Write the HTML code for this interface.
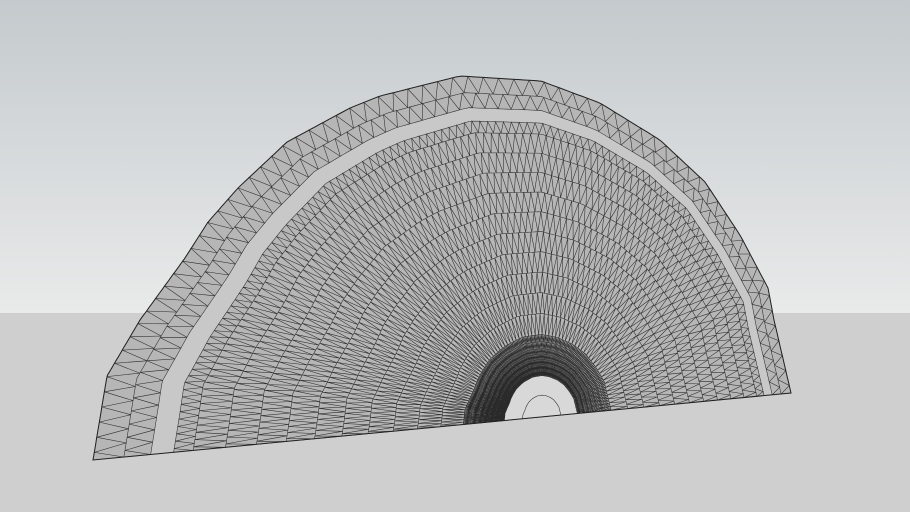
<!DOCTYPE html><html><head><style>
html,body{margin:0;padding:0;width:910px;height:512px;overflow:hidden}
</style></head><body>
<svg id="s" width="910" height="512" viewBox="0 0 910 512" xmlns="http://www.w3.org/2000/svg">
<defs><linearGradient id="sky" x1="0" y1="0" x2="0" y2="1">
<stop offset="0" stop-color="#c4cacd"/><stop offset="1" stop-color="#e9eaea"/></linearGradient></defs>
<rect width="910" height="313" fill="url(#sky)"/>
<rect y="313" width="910" height="199" fill="#cfcfcf"/>
<g id="g"></g>
</svg>
<script>
var pts=[[791,393],[774,320],[768,288],[740,235],[705,182],[660,140],[600,103],[541,81],[460,76],[380,96],[350,108],[287,142],[238,188],[208,222],[185,258],[140,320],[107,376],[93,460]];
var cum=[0];for(var i=1;i<pts.length;i++){var dx=pts[i][0]-pts[i-1][0],dy=pts[i][1]-pts[i-1][1];cum.push(cum[i-1]+Math.sqrt(dx*dx+dy*dy));}
var L=cum[cum.length-1];
function Bd(t){var s=t/Math.PI*L;for(var i=1;i<pts.length;i++){if(s<=cum[i]||i==pts.length-1){var f=(s-cum[i-1])/(cum[i]-cum[i-1]);f=Math.max(0,Math.min(1,f));
return [pts[i-1][0]+f*(pts[i][0]-pts[i-1][0]),pts[i-1][1]+f*(pts[i][1]-pts[i-1][1])];}}}
var C=[542,417],g0=0.2865;
function P(r,t){t=Math.max(0,Math.min(Math.PI,t));var b=Bd(t),c=Math.cos(t);var s=r*(1+g0*c)/(1+g0*r*c);return [C[0]+s*(b[0]-C[0]),C[1]+s*(b[1]-C[1])];}
function f1(p){return p[0].toFixed(1)+' '+p[1].toFixed(1);}
var g=document.getElementById('g'),out='';
var M=200;
var dd='';for(var i=0;i<=M;i++){dd+=(i?'L':'M')+f1(P(1,Math.PI*i/M));}dd+='Z';
function poly(r1,r2,fill){var s='';for(var i=0;i<=M;i++){s+=(i?'L':'M')+f1(P(r2,Math.PI*i/M));}
for(var i=M;i>=0;i--){s+='L'+f1(P(r1,Math.PI*i/M));}return '<path d="'+s+'Z" fill="'+fill+'"/>';}
var rings=[0.114,0.13,0.145,0.16,0.175,0.19,0.21,0.23,0.29,0.35,0.41,0.47,0.53,0.59,0.65,0.71,0.77,0.83,0.865,0.905,0.95,1.0];
var bandA=0.865,bandB=0.905;
out+='<path d="'+dd+'" fill="#b6b6b6"/>';
out+=poly(bandA,bandB,'#c8c8c8');
out+=poly(0,0.114,'#d8d8d8');
var lines='';
for(var j=0;j<rings.length-1;j++){var r1=rings[j],r2=rings[j+1];
if(r1==bandA)continue;
var N=r1<0.23?180:(r1<0.865?Math.round(60+r1*70):(r1<0.95?75:70));
for(var i=0;i<=N;i++){var t=Math.PI*i/N,t2=Math.min(Math.PI,Math.PI*(i+0.5)/N);
lines+='M'+f1(P(r1,t))+'L'+f1(P(r2,t2));
if(i<N){lines+='L'+f1(P(r1,Math.PI*(i+1)/N));}}}
for(var j=0;j<rings.length;j++){var s='';for(var i=0;i<=M;i++){s+=(i?'L':'M')+f1(P(rings[j],Math.PI*i/M));}lines+=s;}
var s='';for(var i=0;i<=80;i++){s+=(i?'L':'M')+f1(P(0.06,Math.PI*i/80));}lines+=s;
lines+='M'+f1(P(1,0))+'L'+f1(P(1,Math.PI));
out+='<path d="'+lines+'" stroke="#2a2a2a" stroke-width="0.55" fill="none"/>';
out+='<path d="'+dd+'" stroke="#222" stroke-width="1" fill="none"/>';
g.innerHTML=out;
</script>
</body></html>
